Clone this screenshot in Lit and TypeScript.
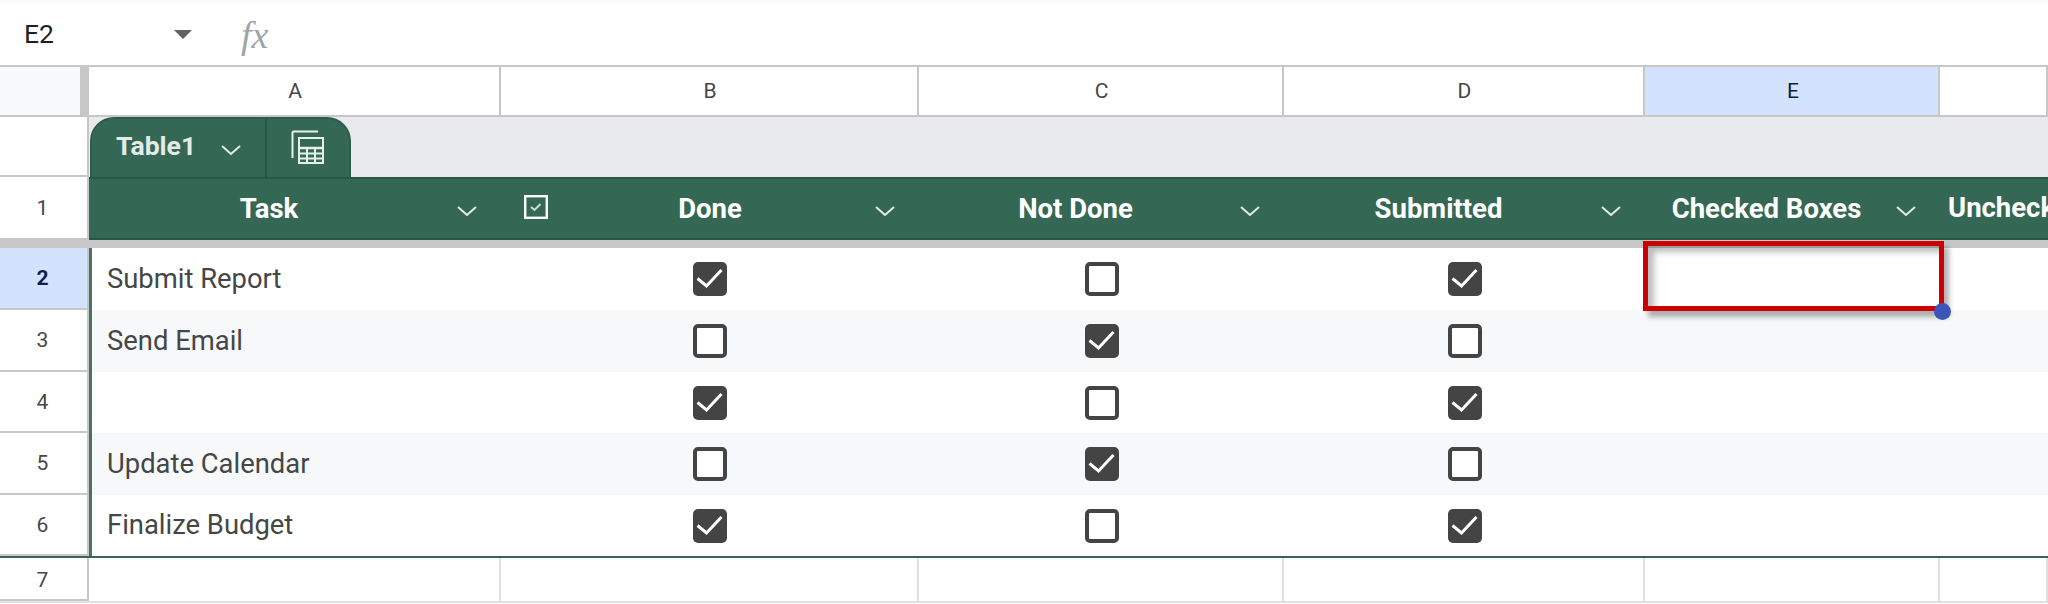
import { LitElement, html, css } from "lit";
import { customElement } from "lit/decorators.js";

const rows: [string, boolean, boolean, boolean][] = [
  ["Submit Report", true, false, true],
  ["Send Email", false, true, false],
  ["", true, false, true],
  ["Update Calendar", false, true, false],
  ["Finalize Budget", true, false, true],
];

const chevron = () => html`<svg class="chev" width="22" height="12" viewBox="0 0 22 12" fill="none"><path d="M2 2l9 8 9-8" stroke="#e4ece8" stroke-width="2"/></svg>`;

@customElement("app-root")
export class AppRoot extends LitElement {
  static styles = css`
    :host { display: block; width: 2048px; height: 604px; overflow: hidden; background: #fff; font-family: Roboto, "Liberation Sans", sans-serif; color: #3c4043; }
    * { box-sizing: border-box; }
    .formula { height: 67px; border-top: 4px solid #f9fbfd; border-bottom: 2px solid #c7c7c7; display: flex; align-items: center; }
    .name { width: 174px; padding-left: 24px; font-size: 26.5px; color: #1f1f1f; padding-bottom: 3px; }
    .caret { width: 0; height: 0; border-left: 9px solid transparent; border-right: 9px solid transparent; border-top: 9px solid #5f6368; }
    .fx { margin-left: 49px; font: italic 38px "Liberation Serif", serif; color: #a0a4a8; line-height: 1; }
    .cols { display: grid; grid-template-columns: 89px 412px 418px 365px 361px 295px 108px; }
    .colhead { height: 50px; border-bottom: 2px solid #c7c7c7; }
    .corner { background: #f8f9fa; border-right: 9px solid #c7c7c7; }
    .ch { display: flex; align-items: center; justify-content: center; border-right: 2px solid #c7c7c7; padding-left: 2px; font-size: 21px; color: #444746; }
    .ch.sel { background: #d3e3fd; color: #0b1f4b; padding-left: 3px; }
    .band { display: grid; grid-template-columns: 89px 1fr; height: 60px; }
    .rh { display: flex; align-items: center; justify-content: center; border-bottom: 2px solid #c7c7c7; border-right: 2px solid #c7c7c7; padding-right: 2px; font-size: 21px; color: #444746; background: #fff; }
    .rh.sel { background: #d3e3fd; color: #0b1f4b; font-weight: 700; }
    .bandfill { background: #e8eaed; display: flex; align-items: stretch; }
    .tab { width: 261px; margin-left: 1px; background: #356854; border-radius: 24px 24px 0 0; border: 2px solid #2f5d4b; border-bottom: none; display: flex; color: #e3ebe7; }
    .tabname { width: 175px; border-right: 2px solid #2b5545; display: flex; align-items: center; padding-left: 24px; gap: 24px; font-size: 26.5px; font-weight: 700; padding-bottom: 6px; white-space: nowrap; }
    .tabname .chev { margin-top: 10px; }
    .tabicon { flex: 1; display: flex; align-items: center; justify-content: center; padding: 0 2px 2px 0; }
    .head { height: 63px; }
    .head .hc { background: #356854; border-top: 2px solid #2b5545; border-bottom: 2px solid #2b5545; color: #fff; font-size: 27.5px; font-weight: 700; display: grid; grid-template-columns: 1fr 52px; align-items: center; text-align: center; white-space: nowrap; overflow: hidden; }
    .head .hc.both { grid-template-columns: 52px 1fr 52px; }
    .head .hc.clip { display: block; text-align: left; line-height: 58px; padding-left: 8px; }
    .head .hc .chev { margin-left: 7px; margin-top: 5px; }
    .hico { justify-self: end; margin-right: 5px; margin-bottom: 3px; }
    .gap { height: 8px; background: #c7c7c7; }
    .body { display: grid; grid-template-rows: 62px 62px 61px 62px 63px; }
    .tr.alt { background: #f6f8f9; }
    .tr.last { border-bottom: 2px solid #356854; }
    .td { display: flex; align-items: center; justify-content: center; position: relative; }
    .td.text { justify-content: flex-start; border-left: 3px solid #4a7262; padding-left: 15px; padding-bottom: 1px; font-size: 27.4px; color: #444746; white-space: nowrap; }
    .cb { width: 34px; height: 34px; border-radius: 5px; border: 4px solid #444; display: block; background: #fff; }
    .cb.on { background: #444; border: none; }
    .sel-box { position: absolute; left: -2px; right: -4px; top: -7px; bottom: -1px; border: 5px solid #cc0000; box-shadow: 5px 6px 5px rgba(60,64,67,.4), inset 6px 6px 6px rgba(60,64,67,.35); z-index: 2; }
    .handle { position: absolute; right: -12px; bottom: -14px; width: 17px; height: 17px; border-radius: 50%; background: #3c56b8; }
    .foot { height: 45px; border-bottom: 2px solid #e0e0e0; }
    .foot .rh { border-bottom: 2px solid #c7c7c7; padding-top: 3px; }
    .foot .fc { border-right: 2px solid #e0e0e0; }
  `;

  private cb(on: boolean) {
    return on
      ? html`<svg class="cb on" viewBox="0 0 34 34"><path d="M4.5 16.5l9 7.5 15-16" fill="none" stroke="#fff" stroke-width="3"/></svg>`
      : html`<span class="cb"></span>`;
  }

  render() {
    return html`
      <div class="formula">
        <div class="name">E2</div>
        <div class="caret"></div>
        <div class="fx">fx</div>
      </div>
      <div class="cols colhead">
        <div class="corner"></div>
        <div class="ch">A</div><div class="ch">B</div><div class="ch">C</div><div class="ch">D</div>
        <div class="ch sel">E</div><div class="ch"></div>
      </div>
      <div class="band">
        <div class="rh"></div>
        <div class="bandfill">
          <div class="tab">
            <div class="tabname">Table1 ${chevron()}</div>
            <div class="tabicon">
              <svg width="33" height="34" viewBox="0 0 33 34" fill="none" stroke="#e8efeb" stroke-width="2">
                <path d="M27 1.5H2.5a1 1 0 0 0-1 1V28"/>
                <rect x="8" y="8" width="24" height="25"/>
                <path d="M8 18h24" stroke-width="2.5"/>
                <path d="M8 23.5h24M8 28.5h24M16 18v15M24 18v15"/>
              </svg>
            </div>
          </div>
        </div>
      </div>
      <div class="cols head">
        <div class="rh">1</div>
        <div class="hc"><span>Task</span>${chevron()}</div>
        <div class="hc both">
          <svg class="hico" width="24" height="24" viewBox="0 0 24 24" fill="none"><rect x="1.2" y="1.2" width="21.6" height="21.6" stroke="#fff" stroke-width="2.4"/><path d="M7 12l3.5 3 6-6" stroke="#cfdcd6" stroke-width="2"/></svg>
          <span>Done</span>${chevron()}
        </div>
        <div class="hc"><span>Not Done</span>${chevron()}</div>
        <div class="hc"><span>Submitted</span>${chevron()}</div>
        <div class="hc"><span>Checked Boxes</span>${chevron()}</div>
        <div class="hc clip">Unchecked Boxes</div>
      </div>
      <div class="gap"></div>
      <div class="body">
        ${rows.map((r, i) => html`
          <div class="cols tr ${i % 2 ? "alt" : ""} ${i === rows.length - 1 ? "last" : ""}">
            <div class="rh ${i === 0 ? "sel" : ""}">${i + 2}</div>
            <div class="td text">${r[0]}</div>
            <div class="td">${this.cb(r[1])}</div>
            <div class="td">${this.cb(r[2])}</div>
            <div class="td">${this.cb(r[3])}</div>
            <div class="td">${i === 0 ? html`<div class="sel-box"><div class="handle"></div></div>` : ""}</div>
            <div class="td"></div>
          </div>`)}
      </div>
      <div class="cols foot">
        <div class="rh">7</div>
        <div class="fc"></div><div class="fc"></div><div class="fc"></div><div class="fc"></div><div class="fc"></div><div class="fc"></div>
      </div>
    `;
  }
}
